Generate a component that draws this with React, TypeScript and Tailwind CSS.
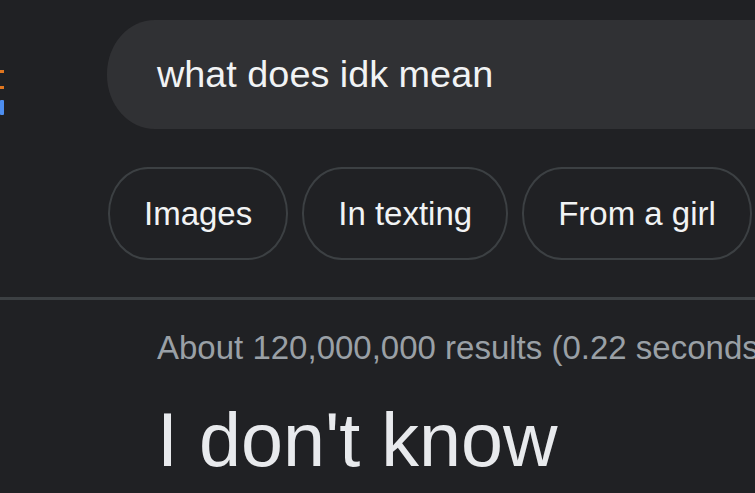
import React from 'react'

const chips = ['Images', 'In texting', 'From a girl']

export default function App() {
  return (
    <div className="h-[493px] w-[755px] overflow-hidden bg-[#202124] font-['Liberation_Sans',Arial,sans-serif]">
      {/* Header: logo edge + search box */}
      <div className="flex pt-[20px]">
        <svg width="6" height="50" viewBox="0 0 6 50" className="mt-[50px] shrink-0">
          <rect x="0" y="0" width="4" height="3" fill="#e0761f" />
          <rect x="0" y="16" width="4" height="3" fill="#e0761f" />
          <rect x="0" y="30" width="4" height="15" rx="1" fill="#4d8ef0" />
        </svg>
        <div className="ml-[101px] flex h-[109px] w-[760px] shrink-0 items-center rounded-[48px/54px] bg-[#303134] pl-[50px]">
          <span className="text-[37.8px] text-[#f1f3f4]">what does idk mean</span>
        </div>
      </div>

      {/* Suggestion chips */}
      <div className="mt-[38px] flex gap-[14px] pl-[108px]">
        {chips.map((c) => (
          <div
            key={c}
            className="flex h-[93px] shrink-0 items-center rounded-[40px/46px] border-2 border-[#3c4043] px-[34px]"
          >
            <span className="text-[33px] text-[#f1f3f4]">{c}</span>
          </div>
        ))}
      </div>

      <div className="mt-[37px] h-[3px] w-full bg-[#3c4043]" />

      <div className="pl-[157px]">
        <div className="mt-[30px] whitespace-nowrap text-[33px] leading-[36px] text-[#9aa0a6]">
          About 120,000,000 results (0.22 seconds)
        </div>
        <div className="mt-[32px] whitespace-nowrap text-[75.5px] leading-[84px] text-[#e8eaed]">
          I don't know
        </div>
      </div>
    </div>
  )
}
